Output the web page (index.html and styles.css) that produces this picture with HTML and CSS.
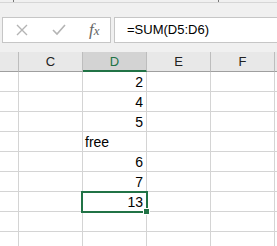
FILE: index.html
```html
<!DOCTYPE html>
<html lang="en">
<head>
    <meta charset="UTF-8">
    <title>Sheet - SUM</title>
    <link rel="stylesheet" href="styles.css">
</head>
<body>

    <div class="ribbon">
        <span class="launcher launcher-left"></span>
        <span class="group-label">Font</span>
        <span class="launcher launcher-right"></span>
    </div>

    <div class="formula-bar">
        <div class="fn-box">
            <svg class="icon" width="12" height="12" viewBox="0 0 12 12">
                <path d="M1 1 L11 11 M11 1 L1 11" stroke="#b4b4b4" stroke-width="1.4" fill="none"/>
            </svg>
            <svg class="icon" width="14" height="12" viewBox="0 0 14 12">
                <path d="M1 6 L5 10 L13 1" stroke="#b4b4b4" stroke-width="1.6" fill="none"/>
            </svg>
            <span class="fx">f<i>x</i></span>
        </div>
        <div class="formula-input">=SUM(D5:D6)</div>
    </div>

    <div class="sheet">
        <div class="col-head"></div>
        <div class="col-head">C</div>
        <div class="col-head active">D</div>
        <div class="col-head">E</div>
        <div class="col-head">F</div>
        <div class="col-head"></div>

        <div class="cell"></div><div class="cell"></div><div class="cell num">2</div><div class="cell"></div><div class="cell"></div><div class="cell"></div>
        <div class="cell"></div><div class="cell"></div><div class="cell num">4</div><div class="cell"></div><div class="cell"></div><div class="cell"></div>
        <div class="cell"></div><div class="cell"></div><div class="cell num">5</div><div class="cell"></div><div class="cell"></div><div class="cell"></div>
        <div class="cell"></div><div class="cell"></div><div class="cell">free</div><div class="cell"></div><div class="cell"></div><div class="cell"></div>
        <div class="cell"></div><div class="cell"></div><div class="cell num">6</div><div class="cell"></div><div class="cell"></div><div class="cell"></div>
        <div class="cell"></div><div class="cell"></div><div class="cell num">7</div><div class="cell"></div><div class="cell"></div><div class="cell"></div>
        <div class="cell"></div><div class="cell"></div><div class="cell num selected">13<span class="handle"></span></div><div class="cell"></div><div class="cell"></div><div class="cell"></div>
        <div class="cell"></div><div class="cell"></div><div class="cell"></div><div class="cell"></div><div class="cell"></div><div class="cell"></div>
        <div class="cell"></div><div class="cell"></div><div class="cell"></div><div class="cell"></div><div class="cell"></div><div class="cell"></div>
    </div>

</body>
</html>
```

FILE: styles.css
```css
body {
    margin: 0;
    width: 277px;
    height: 246px;
    overflow: hidden;
    background-color: #f0f0f0;
    font-family: "Liberation Sans", Arial, sans-serif;
    color: #000;
}

/* bottom edge of the ribbon, mostly scrolled away */
.ribbon {
    position: relative;
    height: 2px;
    overflow: hidden;
    border-bottom: 1px solid #d6d6d6;
}

.group-label {
    display: block;
    margin: -11px 0 0 105px;
    font-size: 12px;
    line-height: 14px;
    color: #444;
}

.launcher {
    position: absolute;
    top: 0;
    width: 4px;
    height: 2px;
    border-right: 1px solid #777;
}

.launcher-left { left: 9px; }
.launcher-right { left: 214px; }

.formula-bar {
    display: flex;
    height: 26px;
    margin: 14px 0 9px 2px;
}

.fn-box {
    display: flex;
    align-items: center;
    width: 107px;
    background-color: #fff;
    border: 1px solid #c6c6c6;
}

.fn-box .icon:first-child { margin-left: 13px; }
.fn-box .icon + .icon { margin-left: 24px; }

.fx {
    margin-left: 23px;
    font-family: "Liberation Serif", serif;
    font-style: italic;
    font-size: 17px;
    line-height: 20px;
    color: #666;
}

.fx i {
    font-size: 13px;
}

.formula-input {
    flex: 1;
    margin-left: 3px;
    margin-right: -10px;
    padding-left: 12px;
    background-color: #fff;
    border: 1px solid #c6c6c6;
    font-size: 13px;
    line-height: 24px;
}

.sheet {
    display: grid;
    grid-template-columns: 19px repeat(5, 64px);
    grid-auto-rows: 20px;
    background-color: #fff;
}

.col-head {
    box-sizing: border-box;
    background-color: #e8e8e8;
    border-right: 1px solid #bdbdbd;
    border-bottom: 1px solid #9f9f9f;
    text-align: center;
    font-size: 13px;
    line-height: 20px;
    color: #222;
}

.col-head.active {
    background-color: #d3d3d3;
    border-bottom: 2px solid #217346;
    line-height: 19px;
    color: #217346;
}

.cell {
    box-sizing: border-box;
    display: flex;
    align-items: flex-end;
    padding: 0 3px 1px 2px;
    border-right: 1px solid #d4d4d4;
    border-bottom: 1px solid #d4d4d4;
    font-size: 14px;
    line-height: 16px;
}

.cell.num {
    justify-content: flex-end;
}

.cell.selected {
    position: relative;
}

.cell.selected::after {
    content: "";
    position: absolute;
    top: -1px;
    left: -2px;
    right: -2px;
    bottom: -2px;
    border: 2px solid #217346;
}

.handle {
    position: absolute;
    right: -4px;
    bottom: -4px;
    width: 5px;
    height: 5px;
    background-color: #217346;
    border: 1px solid #fff;
    z-index: 1;
}
```
